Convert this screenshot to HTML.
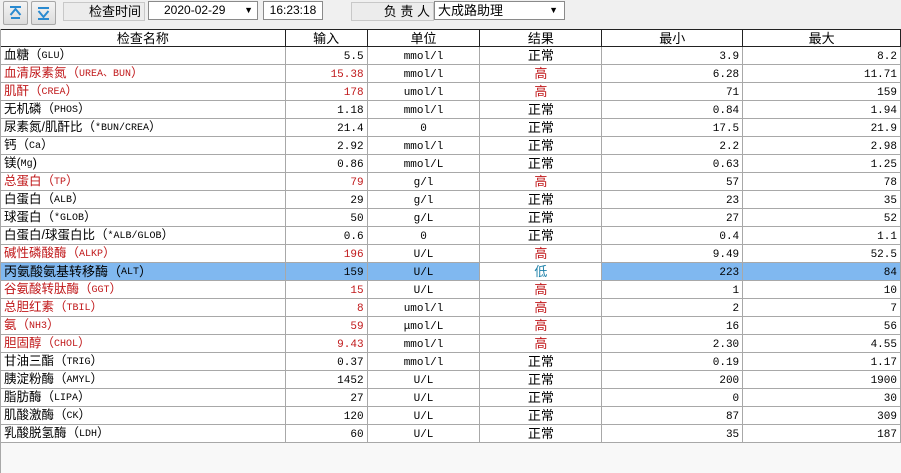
<!DOCTYPE html>
<html><head><meta charset="utf-8"><style>
*{margin:0;padding:0;box-sizing:border-box}
body{width:901px;height:463px;background:#f0f0f0;font-family:"Liberation Sans","Noto Sans CJK SC",sans-serif;font-size:12px;color:#000;position:relative;overflow:hidden}
.a{position:absolute}
.btn{top:1px;width:25px;height:24px;border:1px solid #a8a8a8;border-radius:2px;background:linear-gradient(#f4f4f4,#dcdcdc)}
.lbl{border:1px solid #c8c8c8;background:#ececec;height:19px;top:2px;text-align:right;padding-right:3px;line-height:17px;font-size:13px}
.box{border:1px solid #8a8a8a;background:#fff;height:19px;top:1px;line-height:17px;font-size:12px}
#t{position:absolute;left:0;top:29px;width:901px;background:#fff;border-left:1px solid #a8a8a8}
.row{display:flex;height:18px;border-bottom:1px solid #a8a8a8;overflow:hidden}
.row>div{height:17px;display:flex;align-items:center;line-height:1;border-right:1px solid #a8a8a8;padding:0 3px;white-space:nowrap;overflow:hidden}
.row>div:nth-child(1){width:285px}.row>div:nth-child(2){width:82px}.row>div:nth-child(3){width:113px}
.row>div:nth-child(4){width:122px}.row>div:nth-child(5){width:141px}.row>div:nth-child(6){width:158px}
.h{border-top:1px solid #222;border-bottom:1px solid #222}
.h>div{justify-content:center;font-size:13px;border-right:1px solid #222!important}
.n{font-family:"Liberation Mono",monospace;font-size:11px;justify-content:flex-end;padding-top:4px!important}
.c{justify-content:center;font-family:"Liberation Mono","Noto Sans CJK SC",monospace;font-size:11px;padding-top:4px!important}
.r{justify-content:center;font-size:13px}
.nm{font-size:12.5px}
.m{font-family:"Liberation Mono",monospace;font-size:10px;position:relative;top:1px}
.red>div{color:#c0181a}
.red>div.u{color:#000}
.sel>div{background:#80b8f0}
.sel>div.r{background:#fff;color:#1a7fa8}
</style></head><body>
<div class="a btn" style="left:3px"><svg width="23" height="22"><path d="M6 5h11M6.5 13l5-6 5 6" stroke="#2a8ad0" stroke-width="2" fill="none"/><path d="M7 16h9" stroke="#2a8ad0" stroke-width="2"/></svg></div>
<div class="a btn" style="left:31px"><svg width="23" height="22"><path d="M6 6h11M6.5 9l5 6 5-6" stroke="#2a8ad0" stroke-width="2" fill="none"/><path d="M6 17h11" stroke="#2a8ad0" stroke-width="2"/></svg></div>
<div class="a lbl" style="left:63px;width:82px">检查时间</div>
<div class="a box" style="left:148px;width:110px;padding-left:15px">2020-02-29<span style="position:absolute;right:4px;font-size:9px">▼</span></div>
<div class="a box" style="left:263px;width:60px;text-align:center">16:23:18</div>
<div class="a lbl" style="left:351px;width:83px">负 责 人</div>
<div class="a box" style="left:434px;width:131px;padding-left:3px;font-size:13px">大成路助理<span style="position:absolute;right:6px;font-size:9px;top:0">▼</span></div>
<div id="t">
<div class="row h"><div>检查名称</div><div>输入</div><div>单位</div><div>结果</div><div>最小</div><div>最大</div></div>
<div class="row"><div class="nm">血糖（<span class="m">GLU</span>）</div><div class="n">5.5</div><div class="c">mmol/l</div><div class="r">正常</div><div class="n">3.9</div><div class="n">8.2</div></div>
<div class="row red"><div class="nm">血清尿素氮（<span class="m">UREA、BUN</span>）</div><div class="n">15.38</div><div class="c u">mmol/l</div><div class="r">高</div><div class="n u">6.28</div><div class="n u">11.71</div></div>
<div class="row red"><div class="nm">肌酐（<span class="m">CREA</span>）</div><div class="n">178</div><div class="c u">umol/l</div><div class="r">高</div><div class="n u">71</div><div class="n u">159</div></div>
<div class="row"><div class="nm">无机磷（<span class="m">PHOS</span>）</div><div class="n">1.18</div><div class="c">mmol/l</div><div class="r">正常</div><div class="n">0.84</div><div class="n">1.94</div></div>
<div class="row"><div class="nm">尿素氮/肌酐比（<span class="m">*BUN/CREA</span>）</div><div class="n">21.4</div><div class="c">0</div><div class="r">正常</div><div class="n">17.5</div><div class="n">21.9</div></div>
<div class="row"><div class="nm">钙（<span class="m">Ca</span>）</div><div class="n">2.92</div><div class="c">mmol/l</div><div class="r">正常</div><div class="n">2.2</div><div class="n">2.98</div></div>
<div class="row"><div class="nm">镁(<span class="m">Mg</span>)</div><div class="n">0.86</div><div class="c">mmol/L</div><div class="r">正常</div><div class="n">0.63</div><div class="n">1.25</div></div>
<div class="row red"><div class="nm">总蛋白（<span class="m">TP</span>）</div><div class="n">79</div><div class="c u">g/l</div><div class="r">高</div><div class="n u">57</div><div class="n u">78</div></div>
<div class="row"><div class="nm">白蛋白（<span class="m">ALB</span>）</div><div class="n">29</div><div class="c">g/l</div><div class="r">正常</div><div class="n">23</div><div class="n">35</div></div>
<div class="row"><div class="nm">球蛋白（<span class="m">*GLOB</span>）</div><div class="n">50</div><div class="c">g/L</div><div class="r">正常</div><div class="n">27</div><div class="n">52</div></div>
<div class="row"><div class="nm">白蛋白/球蛋白比（<span class="m">*ALB/GLOB</span>）</div><div class="n">0.6</div><div class="c">0</div><div class="r">正常</div><div class="n">0.4</div><div class="n">1.1</div></div>
<div class="row red"><div class="nm">碱性磷酸酶（<span class="m">ALKP</span>）</div><div class="n">196</div><div class="c u">U/L</div><div class="r">高</div><div class="n u">9.49</div><div class="n u">52.5</div></div>
<div class="row sel"><div class="nm" style="font-size:13px">丙氨酸氨基转移酶（<span class="m">ALT</span>）</div><div class="n">159</div><div class="c">U/L</div><div class="r">低</div><div class="n">223</div><div class="n">84</div></div>
<div class="row red"><div class="nm">谷氨酸转肽酶（<span class="m">GGT</span>）</div><div class="n">15</div><div class="c u">U/L</div><div class="r">高</div><div class="n u">1</div><div class="n u">10</div></div>
<div class="row red"><div class="nm">总胆红素（<span class="m">TBIL</span>）</div><div class="n">8</div><div class="c u">umol/l</div><div class="r">高</div><div class="n u">2</div><div class="n u">7</div></div>
<div class="row red"><div class="nm">氨（<span class="m">NH3</span>）</div><div class="n">59</div><div class="c u">μmol/L</div><div class="r">高</div><div class="n u">16</div><div class="n u">56</div></div>
<div class="row red"><div class="nm">胆固醇（<span class="m">CHOL</span>）</div><div class="n">9.43</div><div class="c u">mmol/l</div><div class="r">高</div><div class="n u">2.30</div><div class="n u">4.55</div></div>
<div class="row"><div class="nm">甘油三酯（<span class="m">TRIG</span>）</div><div class="n">0.37</div><div class="c">mmol/l</div><div class="r">正常</div><div class="n">0.19</div><div class="n">1.17</div></div>
<div class="row"><div class="nm">胰淀粉酶（<span class="m">AMYL</span>）</div><div class="n">1452</div><div class="c">U/L</div><div class="r">正常</div><div class="n">200</div><div class="n">1900</div></div>
<div class="row"><div class="nm">脂肪酶（<span class="m">LIPA</span>）</div><div class="n">27</div><div class="c">U/L</div><div class="r">正常</div><div class="n">0</div><div class="n">30</div></div>
<div class="row"><div class="nm">肌酸激酶（<span class="m">CK</span>）</div><div class="n">120</div><div class="c">U/L</div><div class="r">正常</div><div class="n">87</div><div class="n">309</div></div>
<div class="row"><div class="nm">乳酸脱氢酶（<span class="m">LDH</span>）</div><div class="n">60</div><div class="c">U/L</div><div class="r">正常</div><div class="n">35</div><div class="n">187</div></div>
<div style="height:30px;background:#f8f8f8"></div>
</div>
</body></html>
